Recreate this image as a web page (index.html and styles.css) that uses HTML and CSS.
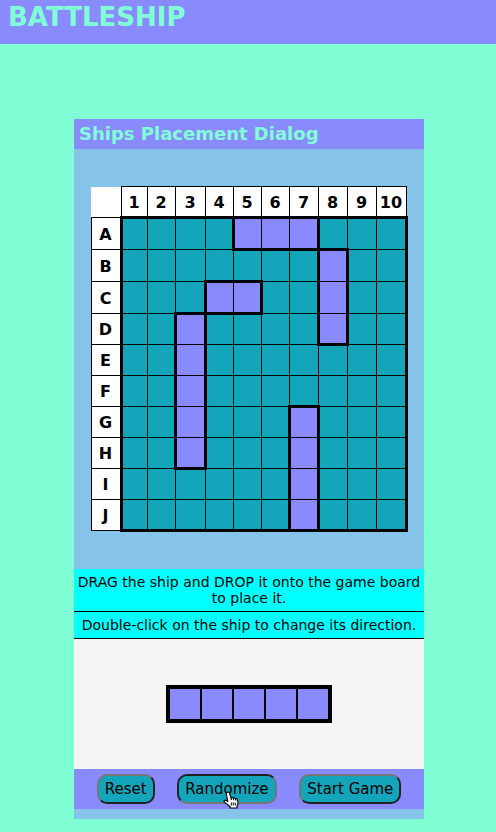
FILE: index.html
```html
<!DOCTYPE html>
<html lang="en">
<head>
  <meta charset="UTF-8">
  <meta name="viewport" content="width=device-width, initial-scale=1.0">
  <title>Battleship</title>
  <link rel="stylesheet" href="styles.css">
</head>
<body>

  <header class="header">
    <h1>BATTLESHIP</h1>
  </header>

  <main class="main">
    <section class="dialog" aria-labelledby="dialogTitle">
      <h2 id="dialogTitle" class="dialog-title">Ships Placement Dialog</h2>

      <div class="board-wrap">
        <table class="board">
          <colgroup>
            <col class="w-lg"><col class="w-xs"><col class="w-sm"><col class="w-lg"><col class="w-sm"><col class="w-sm">
            <col class="w-sm"><col class="w-md"><col class="w-md"><col class="w-md"><col class="w-lg">
          </colgroup>
          <thead>
            <tr>
              <td class="corner"></td>
              <th scope="col">1</th><th scope="col">2</th><th scope="col">3</th><th scope="col">4</th><th scope="col">5</th>
              <th scope="col">6</th><th scope="col">7</th><th scope="col">8</th><th scope="col">9</th><th scope="col">10</th>
            </tr>
          </thead>
          <tbody>
            <tr class="tall">
              <th scope="row">A</th>
              <td></td><td></td><td></td><td></td><td class="ship t b l"></td><td class="ship t b"></td><td class="ship t b r"></td><td></td><td></td><td></td>
            </tr>
            <tr class="tall">
              <th scope="row">B</th>
              <td></td><td></td><td></td><td></td><td></td><td></td><td></td><td class="ship t l r"></td><td></td><td></td>
            </tr>
            <tr class="tall">
              <th scope="row">C</th>
              <td></td><td></td><td></td><td class="ship t b l"></td><td class="ship t b r"></td><td></td><td></td><td class="ship l r"></td><td></td><td></td>
            </tr>
            <tr>
              <th scope="row">D</th>
              <td></td><td></td><td class="ship t l r"></td><td></td><td></td><td></td><td></td><td class="ship b l r"></td><td></td><td></td>
            </tr>
            <tr>
              <th scope="row">E</th>
              <td></td><td></td><td class="ship l r"></td><td></td><td></td><td></td><td></td><td></td><td></td><td></td>
            </tr>
            <tr>
              <th scope="row">F</th>
              <td></td><td></td><td class="ship l r"></td><td></td><td></td><td></td><td></td><td></td><td></td><td></td>
            </tr>
            <tr>
              <th scope="row">G</th>
              <td></td><td></td><td class="ship l r"></td><td></td><td></td><td></td><td class="ship t l r"></td><td></td><td></td><td></td>
            </tr>
            <tr>
              <th scope="row">H</th>
              <td></td><td></td><td class="ship b l r"></td><td></td><td></td><td></td><td class="ship l r"></td><td></td><td></td><td></td>
            </tr>
            <tr>
              <th scope="row">I</th>
              <td></td><td></td><td></td><td></td><td></td><td></td><td class="ship l r"></td><td></td><td></td><td></td>
            </tr>
            <tr>
              <th scope="row">J</th>
              <td></td><td></td><td></td><td></td><td></td><td></td><td class="ship b l r"></td><td></td><td></td><td></td>
            </tr>
          </tbody>
        </table>
      </div>

      <p class="hint">DRAG the ship and DROP it onto the game board to place it.</p>
      <p class="hint">Double-click on the ship to change its direction.</p>

      <div class="dock">
        <div class="dock-ship" draggable="true">
          <span></span><span></span><span></span><span></span><span></span>
        </div>
      </div>

      <div class="actions">
        <button type="button" class="btn">Reset</button>
        <div class="btn-hold">
          <button type="button" class="btn pressed">Randomize</button>
          <!-- Hand pointer -->
          <svg class="pointer" viewBox="0 0 16 18" width="16" height="18" aria-hidden="true">
            <path d="M4 1.5Q5.5 .3 6.5 2L8 7Q9.3 5.8 10.2 7.2Q11.6 6.2 12.4 7.8Q14 7.2 14.5 9L15 12Q15 14 14 15V17H7V15.5L1.6 11.4Q.2 9.8 1.6 9.2Q2.8 8.8 4.8 10.7L3.3 3.2Q3.2 2 4 1.5Z" fill="#fff" stroke="#000" stroke-width="1.1" stroke-linejoin="round"/>
            <path d="M8 7L8.5 9M10.3 7.4L10.7 9.2M12.4 8L12.7 9.6M8.3 11.5V14.5M10.3 11.5V14.5M12.3 11.5V14.5" fill="none" stroke="#000"/>
          </svg>
        </div>
        <button type="button" class="btn">Start Game</button>
      </div>
    </section>
  </main>

</body>
</html>
```
FILE: styles.css
```css
* {
  box-sizing: border-box;
}

body {
  margin: 0;
  background: #80ffd4;
  color: #000;
  font-family: "DejaVu Sans", Verdana, sans-serif;
  font-size: 14px;
}

.header {
  height: 44px;
  padding: 2px 8px;
  background: #8a8aff;
}

.header h1 {
  margin: 0;
  color: #80ffd4;
  font-size: 26px;
  line-height: 30px;
}

.main {
  padding: 75px 8px 12px 10px;
}

.dialog {
  max-width: 350px;
  margin: 0 auto;
  padding-bottom: 10px;
  background: #85c3e9;
}

.dialog-title {
  margin: 0;
  padding: 0 5px;
  background: #8a8aff;
  color: #80ffd4;
  font-size: 18px;
  line-height: 30px;
}

/* Board */
.board-wrap {
  display: flex;
  justify-content: center;
  padding: 37px 0;
}

.board {
  border-collapse: collapse;
  table-layout: fixed;
  width: 316px;
}

.w-xs { width: 26px; }
.w-sm { width: 28px; }
.w-md { width: 29px; }
.w-lg { width: 30px; }

.board tr {
  height: 31px;
}

.board .tall {
  height: 32px;
}

.board th,
.board td {
  padding: 0;
  border: 1px solid #000;
}

.board th {
  padding-top: 2px;
  background: #fff;
  font-size: 16px;
  line-height: 20px;
  text-align: center;
}

.board .corner {
  border: none;
  background: #fff;
}

.board tbody td {
  background: #15a5bb;
}

.board tbody tr:first-child td { border-top-width: 3px; }
.board tbody tr:last-child td { border-bottom-width: 3px; }
.board tbody td:nth-child(2) { border-left-width: 3px; }
.board tbody td:last-child { border-right-width: 3px; }

.board tbody .ship { background: #8a8aff; }
.board tbody .t { border-top-width: 3px; }
.board tbody .b { border-bottom-width: 3px; }
.board tbody .l { border-left-width: 3px; }
.board tbody .r { border-right-width: 3px; }

/* Instructions */
.hint {
  margin: 0;
  padding: 5px 0;
  border-bottom: 1px solid #000;
  background: #00ffff;
  line-height: 16px;
  text-align: center;
}

/* Ship waiting to be placed */
.dock {
  display: flex;
  justify-content: center;
  align-items: center;
  height: 130px;
  background: #f5f5f5;
}

.dock-ship {
  display: flex;
  gap: 2px;
  border: 4px solid #000;
  background: #000;
}

.dock-ship span {
  width: 30px;
  height: 30px;
  background: #8a8aff;
}

/* Buttons */
.actions {
  display: flex;
  justify-content: space-evenly;
  padding: 5px 0;
  background: #8a8aff;
}

.btn {
  height: 30px;
  padding: 0 6px;
  border: 2px solid;
  border-color: #767676 #212121 #212121 #767676;
  border-radius: 10px;
  background: #15a5bb;
  color: #000;
  font-family: inherit;
  font-size: 15px;
  cursor: pointer;
}

.btn.pressed {
  border-color: #212121 #767676 #767676 #212121;
}

.btn-hold {
  position: relative;
}

.pointer {
  position: absolute;
  left: 46px;
  top: 17px;
  pointer-events: none;
}
```
